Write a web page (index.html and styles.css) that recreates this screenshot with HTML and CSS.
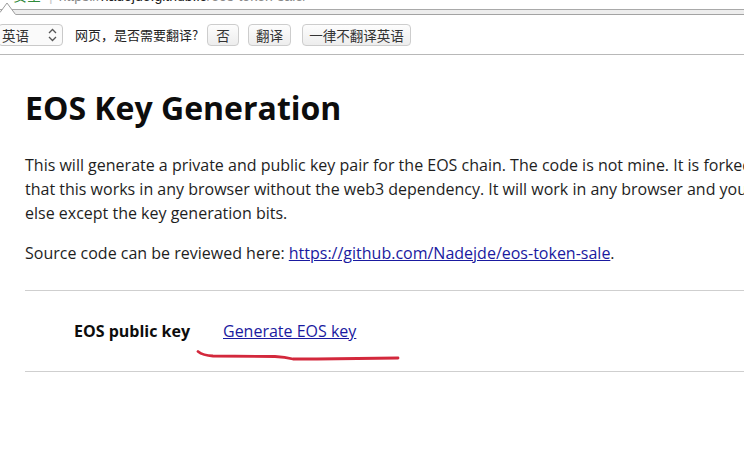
FILE: index.html
```html
<!DOCTYPE html>
<html lang="en">
<head>
<meta charset="utf-8">
<title>EOS Key Generation</title>
<link rel="stylesheet" href="styles.css">
</head>
<body>
<div class="chrome">
  <div class="urlrow"><span class="secure">安全</span><span class="sep">|</span><span class="scheme">https://</span><span class="host">nadejde.github.io</span><span class="path">/eos-token-sale/</span></div>
  <svg class="notch" width="744" height="15" viewBox="0 0 744 15">
    <rect x="0" y="10" width="744" height="4" fill="#ededed"/>
    <line x1="0" y1="9.5" x2="744" y2="9.5" stroke="#a9a9a9" stroke-width="1"/>
    <line x1="0" y1="14.5" x2="744" y2="14.5" stroke="#a3a3a3" stroke-width="1"/>
    <polygon points="0,15 0,12.5 7,3 16,15" fill="#ffffff"/>
    <polyline points="0,12.5 7,3 15.5,14.5" fill="none" stroke="#9c9c9c" stroke-width="1"/>
  </svg>
</div>
<div class="translatebar">
  <div class="langselect"><span>英语</span>
    <svg class="chev" width="9" height="14" viewBox="0 0 9 14"><polyline points="1,5 4.5,1.5 8,5" fill="none" stroke="#555" stroke-width="1.3"/><polyline points="1,9 4.5,12.5 8,9" fill="none" stroke="#555" stroke-width="1.3"/></svg>
  </div>
  <span class="question">网页，是否需要翻译?</span>
  <div class="btns">
    <button class="tbtn b-no">否</button>
    <button class="tbtn b-tr">翻译</button>
    <button class="tbtn b-never">一律不翻译英语</button>
  </div>
</div>
<main class="page">
  <h1 class="title">EOS Key Generation</h1>
  <p class="intro">This will generate a private and public key pair for the EOS chain. The code is not mine. It is forked from the official token sale code and changed so<br>that this works in any browser without the web3 dependency. It will work in any browser and you don't need anything<br>else except the key generation bits.</p>
  <p class="source">Source code can be reviewed here: <a href="#">https://github.com/Nadejde/eos-token-sale</a>.</p>
  <div class="keyrow">
    <span class="keylabel">EOS public key</span>
    <a class="genlink" href="#">Generate EOS key</a>
    <svg class="scribble" width="215" height="18" viewBox="0 0 215 18"><path d="M3 4.5 Q8 8.5 18 9 L80 9.5 Q90 10 98 12 L122 12 L203 11" fill="none" stroke="#d3283c" stroke-width="2.8" stroke-linecap="round" stroke-linejoin="round"/></svg>
  </div>
</main>
</body>
</html>
```
FILE: styles.css
```css
html, body {
  margin: 0;
  padding: 0;
  overflow: hidden;
  background: #ffffff;
}
body {
  width: 744px;
  font-family: "Open Sans", "Noto Sans", sans-serif;
  color: #1a1a1a;
}
.chrome {
  display: grid;
  height: 15px;
  overflow: hidden;
}
.chrome > * {
  grid-area: 1 / 1;
}
.urlrow {
  height: 4px;
  overflow: hidden;
  white-space: nowrap;
  font-family: "Liberation Sans", "Noto Sans CJK SC", sans-serif;
  font-size: 14px;
  line-height: 14px;
}
.urlrow span {
  display: inline-block;
  position: relative;
  top: -11px;
}
.secure { color: #2f8a3a; margin-left: 13px; }
.sep { color: #c8c8c8; margin-left: 8px; margin-right: 6px; }
.scheme { color: #8a8a8a; }
.host { color: #222; }
.path { color: #8a8a8a; }
.notch { display: block; }

.translatebar {
  display: flex;
  align-items: flex-start;
  height: 31px;
  padding-top: 8px;
  border-bottom: 1px solid #b8b8b8;
  font-family: "Noto Sans CJK SC", sans-serif;
  font-size: 13px;
  color: #222;
}
.langselect {
  display: flex;
  align-items: center;
  justify-content: space-between;
  box-sizing: border-box;
  width: 65px;
  height: 22px;
  margin-top: 1px;
  margin-left: -2px;
  padding: 0 5px 0 3px;
  border: 1px solid #c9c9c9;
  border-radius: 4px;
  background: #fafafa;
  font-size: 13.5px;
  color: #333;
}
.chev { display: block; }
.question {
  width: 132px;
  margin-left: 12px;
  line-height: 24px;
  font-size: 13px;
}
.btns {
  display: flex;
  gap: 9px;
  margin-top: 1px;
}
.tbtn {
  box-sizing: border-box;
  height: 22px;
  padding: 0;
  border: 1px solid #cdcdcd;
  border-radius: 4px;
  background: linear-gradient(#fdfdfd, #ededed);
  font-family: "Noto Sans CJK SC", sans-serif;
  font-size: 13.5px;
  line-height: 20px;
  color: #333;
}
.b-no { width: 32px; }
.b-tr { width: 43px; }
.b-never { width: 109px; margin-left: 2px; }

.page {
  width: 1100px;
  padding-left: 25px;
}
.title {
  margin: 34px 0 26px;
  font-size: 32px;
  line-height: 38px;
  font-weight: 700;
  color: #0d0d0d;
}
.intro, .source {
  margin: 0;
  font-size: 16px;
  line-height: 24px;
  white-space: nowrap;
  color: #1e1e1e;
}
.source {
  margin-top: 16px;
  padding-bottom: 25px;
  border-bottom: 1px solid #cfcfcf;
}
a {
  color: #1a1aa0;
}
.keyrow {
  position: relative;
  display: flex;
  align-items: center;
  height: 80px;
  padding-left: 49px;
  border-bottom: 1px solid #cfcfcf;
  font-size: 16px;
  line-height: 24px;
}
.keylabel {
  font-weight: 700;
  color: #0d0d0d;
  width: 149px;
}
.scribble {
  position: absolute;
  left: 170px;
  top: 56px;
}
```
